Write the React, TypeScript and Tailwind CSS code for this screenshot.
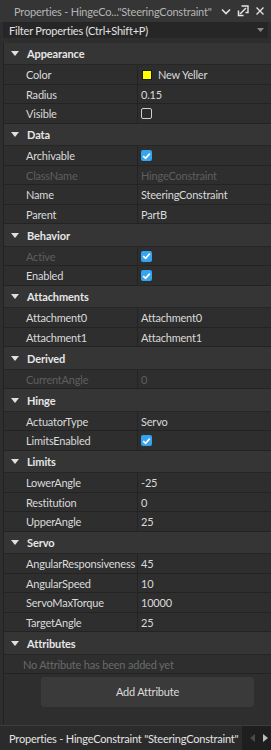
import React from "react";

type Row = {
  name: string;
  value?: string;
  kind?: "text" | "check" | "uncheck" | "color";
  disabled?: boolean;
};

type Section = { title: string; rows: Row[] };

const sections: Section[] = [
  {
    title: "Appearance",
    rows: [
      { name: "Color", value: "New Yeller", kind: "color" },
      { name: "Radius", value: "0.15" },
      { name: "Visible", kind: "uncheck" },
    ],
  },
  {
    title: "Data",
    rows: [
      { name: "Archivable", kind: "check" },
      { name: "ClassName", value: "HingeConstraint", disabled: true },
      { name: "Name", value: "SteeringConstraint" },
      { name: "Parent", value: "PartB" },
    ],
  },
  {
    title: "Behavior",
    rows: [
      { name: "Active", kind: "check", disabled: true },
      { name: "Enabled", kind: "check" },
    ],
  },
  {
    title: "Attachments",
    rows: [
      { name: "Attachment0", value: "Attachment0" },
      { name: "Attachment1", value: "Attachment1" },
    ],
  },
  {
    title: "Derived",
    rows: [{ name: "CurrentAngle", value: "0", disabled: true }],
  },
  {
    title: "Hinge",
    rows: [
      { name: "ActuatorType", value: "Servo" },
      { name: "LimitsEnabled", kind: "check" },
    ],
  },
  {
    title: "Limits",
    rows: [
      { name: "LowerAngle", value: "-25" },
      { name: "Restitution", value: "0" },
      { name: "UpperAngle", value: "25" },
    ],
  },
  {
    title: "Servo",
    rows: [
      { name: "AngularResponsiveness", value: "45" },
      { name: "AngularSpeed", value: "10" },
      { name: "ServoMaxTorque", value: "10000" },
      { name: "TargetAngle", value: "25" },
    ],
  },
];

function Caret() {
  return (
    <svg width="8" height="5" viewBox="0 0 8 5" className="shrink-0">
      <path d="M0 0 L8 0 L4 5 Z" fill="#e0e0e0" />
    </svg>
  );
}

function Header({ title }: { title: string }) {
  return (
    <div className="h-[22.5px] flex items-center bg-[#353535] border-b border-[#262626] pl-[7px]">
      <Caret />
      <span className="ml-[8px] font-bold text-[#e6e6e6] tracking-[-0.1px]">{title}</span>
    </div>
  );
}

function CheckBox({ checked }: { checked: boolean }) {
  if (!checked) {
    return (
      <div className="w-[11px] h-[11px] rounded-[2px] border border-[#d0d0d0] bg-[#2b2b2b]" />
    );
  }
  return (
    <div className="w-[11px] h-[11px] rounded-[2px] bg-[#35a4f0] flex items-center justify-center">
      <svg width="9" height="8" viewBox="0 0 9 8">
        <path d="M1.2 4.2 L3.6 6.4 L7.8 1.6" fill="none" stroke="#ffffff" strokeWidth="1.7" />
      </svg>
    </div>
  );
}

function PropRow({ row }: { row: Row }) {
  const textColor = row.disabled ? "text-[#5e5e5e]" : "text-[#dadada]";
  return (
    <div className="h-[19.5px] flex border-b border-[#232323]">
      <div className={`w-[133px] shrink-0 pl-[22px] flex items-center whitespace-nowrap ${textColor}`}>
        {row.name}
      </div>
      <div className="w-px bg-[#232323]" />
      <div className={`flex-1 flex items-center pl-[3px] whitespace-nowrap ${textColor}`}>
        {row.kind === "color" && (
          <div className="flex items-center">
            <div className="w-[10px] h-[10px] bg-[#ffff00] border border-[#1a1a1a] ml-[1px]" />
            <span className="ml-[6px]">{row.value}</span>
          </div>
        )}
        {row.kind === "check" && <CheckBox checked />}
        {row.kind === "uncheck" && <CheckBox checked={false} />}
        {(!row.kind || row.kind === "text") && row.value}
      </div>
    </div>
  );
}

export default function App() {
  return (
    <div
      className="w-[271px] h-[750px] bg-[#2e2e2e] flex flex-col overflow-hidden text-[11px] leading-none tracking-[-0.2px]"
      style={{ fontFamily: "Lato, 'Open Sans', sans-serif" }}
    >
      {/* Title bar */}
      <div className="h-[22px] shrink-0 flex items-center bg-[#353535] pl-[14px] pr-[6px]">
        <span className="text-[#b4b4b4] text-[11px] whitespace-nowrap flex-1">
          Properties - HingeCo..."SteeringConstraint"
        </span>
        <svg width="10" height="7" viewBox="0 0 10 7" className="mr-[6px]">
          <path d="M1 1.5 L5 5.5 L9 1.5" fill="none" stroke="#e0e0e0" strokeWidth="1.6" />
        </svg>
        <svg width="12" height="12" viewBox="0 0 12 12" className="mr-[6px]">
          <path d="M4.5 1 H11 V7.5 H8.5" fill="none" stroke="#e6e6e6" strokeWidth="1.4" />
          <path d="M9 3 L3 9" stroke="#e6e6e6" strokeWidth="1.5" />
          <path d="M1.5 5.5 V10.5 H6.5" fill="none" stroke="#e6e6e6" strokeWidth="1.5" />
        </svg>
        <svg width="10" height="10" viewBox="0 0 10 10">
          <path d="M1.5 1.5 L8.5 8.5 M8.5 1.5 L1.5 8.5" stroke="#e0e0e0" strokeWidth="1.4" />
        </svg>
      </div>

      {/* Filter */}
      <div className="h-[16px] shrink-0 flex items-center bg-[#262626] mx-[3px] pl-[6px] pr-[4px]">
        <span className="flex-1 text-[#e2e2e2] whitespace-nowrap">Filter Properties (Ctrl+Shift+P)</span>
        <svg width="7" height="4" viewBox="0 0 7 4">
          <path d="M0 0 H7 L3.5 4 Z" fill="#8a8a8a" />
        </svg>
      </div>

      <div className="h-[4.75px] shrink-0" />

      {/* Property grid */}
      <div className="flex-1 flex flex-col ml-[3px] border-l border-[#222222]">
        {sections.map((s) => (
          <div key={s.title}>
            <Header title={s.title} />
            {s.rows.map((r) => (
              <PropRow key={r.name} row={r} />
            ))}
          </div>
        ))}
        <Header title="Attributes" />
        <div className="h-[19.5px] flex items-center pl-[19px] text-[#6a6a6a] border-b border-[#232323] whitespace-nowrap">
          No Attribute has been added yet
        </div>
        <div className="mt-[2.5px] ml-[37px] w-[213px] h-[30px] rounded-[3px] bg-[#3a3a3a] flex items-center justify-center text-[#dcdcdc]">
          Add Attribute
        </div>
        <div className="flex-1" />
      </div>

      {/* Bottom tab bar */}
      <div className="h-[25px] shrink-0 flex border-t border-[#3c3c3c] bg-[#1e1e1e]">
        <div className="w-[242px] flex items-center pl-[9px] bg-[#2b2b2b] text-[#e4e4e4] whitespace-nowrap">
          Properties - HingeConstraint "SteeringConstraint"
        </div>
        <div className="flex-1 flex items-center justify-end gap-[8px] pr-[3px]">
          <svg width="5" height="8" viewBox="0 0 5 8">
            <path d="M5 0 V8 L0 4 Z" fill="#4a4a4a" />
          </svg>
          <svg width="5" height="8" viewBox="0 0 5 8">
            <path d="M0 0 V8 L5 4 Z" fill="#bdbdbd" />
          </svg>
        </div>
      </div>
    </div>
  );
}
